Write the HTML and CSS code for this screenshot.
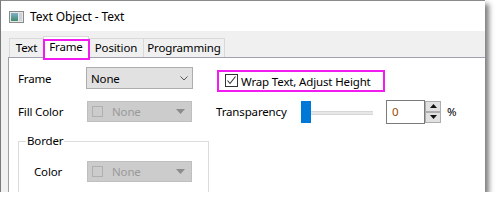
FILE: index.html
```html
<!DOCTYPE html>
<html>
<head>
<meta charset="utf-8">
<link rel="stylesheet" href="styles.css">
</head>
<body>
<div class="window">
  <div class="titlebar">
    <svg class="app-icon" width="15" height="12" viewBox="0 0 15 12">
      <defs>
        <linearGradient id="g1" x1="0" y1="0" x2="0" y2="1">
          <stop offset="0" stop-color="#7fb0c8"/>
          <stop offset="1" stop-color="#3f8a6a"/>
        </linearGradient>
      </defs>
      <rect x="0.5" y="0.5" width="14" height="11" fill="#e8e8e8" stroke="#8a8a8a"/>
      <rect x="2" y="2" width="7" height="8" fill="url(#g1)"/>
      <rect x="10" y="2" width="3" height="8" fill="#c9d3d9"/>
    </svg>
    <span class="title">Text Object - Text</span>
  </div>
  <div class="dialog">
    <div class="tabs">
      <div class="tab w-text">Text</div>
      <div class="tab selected w-frame">Frame<span class="mark"></span></div>
      <div class="tab w-pos">Position</div>
      <div class="tab w-prog">Programming</div>
    </div>
    <div class="panel">
      <div class="col-left">
        <div class="row r1">
          <span class="lbl l1">Frame</span>
          <div class="combo enabled">
            <span class="ctext">None</span>
            <svg class="chev" width="8" height="5" viewBox="0 0 8 5"><path d="M0.5 0.5 L4 4 L7.5 0.5" fill="none" stroke="#555" stroke-width="1"/></svg>
          </div>
        </div>
        <div class="row r2">
          <span class="lbl l2">Fill Color</span>
          <div class="combo disabled">
            <span class="swatch"></span>
            <span class="ctext dis">None</span>
            <svg class="tri" width="9" height="5" viewBox="0 0 9 5"><path d="M0 0 L9 0 L4.5 5 Z" fill="#8c8c8c"/></svg>
          </div>
        </div>
        <fieldset class="group">
          <legend>Border</legend>
          <div class="row r3">
            <span class="lbl l3">Color</span>
            <div class="combo disabled">
              <span class="swatch"></span>
              <span class="ctext dis">None</span>
              <svg class="tri" width="9" height="5" viewBox="0 0 9 5"><path d="M0 0 L9 0 L4.5 5 Z" fill="#8c8c8c"/></svg>
            </div>
          </div>
        </fieldset>
      </div>
      <div class="col-right">
        <label class="check">
          <span class="box">
            <svg width="11" height="11" viewBox="0 0 11 11"><path d="M1.5 5.5 L4 8.5 L9.5 1.5" fill="none" stroke="#333" stroke-width="1.1"/></svg>
          </span>
          <span class="ctext2">Wrap Text, Adjust Height</span>
        </label>
        <div class="row trow">
          <span class="lbl l4">Transparency</span>
          <div class="slider">
            <div class="track"></div>
            <div class="thumb"></div>
          </div>
          <div class="spin">
            <div class="spin-input">0</div>
            <div class="spin-btns">
              <div class="sbtn"><svg width="7" height="4" viewBox="0 0 7 4"><path d="M0 4 L7 4 L3.5 0 Z" fill="#111"/></svg></div>
              <div class="sbtn"><svg width="7" height="4" viewBox="0 0 7 4"><path d="M0 0 L7 0 L3.5 4 Z" fill="#111"/></svg></div>
            </div>
          </div>
          <span class="pct">%</span>
        </div>
      </div>
    </div>
  </div>
</div>
</body>
</html>
```

FILE: styles.css
```css
html, body {
  margin: 0;
  padding: 0;
  background: #ffffff;
}
body {
  font-family: "Noto Sans", "Open Sans", sans-serif;
  font-size: 11.5px;
  letter-spacing: -0.15px;
  color: #000;
}
.window {
  width: 485px;
  height: 192px;
  box-sizing: border-box;
  border-left: 1px solid #7a7a7a;
  border-top: 1px solid #8a8a8a;
  box-shadow: 4px 4px 5px rgba(0, 0, 0, 0.5);
  overflow: hidden;
  display: flex;
  flex-direction: column;
  background: #f0f0f0;
}
.titlebar {
  height: 30px;
  background: #ffffff;
  display: flex;
  align-items: center;
  padding-left: 8px;
  flex: none;
}
.app-icon {
  margin-right: 6px;
  margin-top: 1px;
}
.title {
  font-size: 12px;
  letter-spacing: -0.1px;
  margin-top: 1px;
}
.dialog {
  flex: 1;
  padding: 7px 0 0 7px;
  display: flex;
  flex-direction: column;
}
.tabs {
  display: flex;
  align-items: flex-end;
  height: 19px;
  padding-left: 1px;
  position: relative;
  z-index: 1;
}
.tab {
  box-sizing: border-box;
  height: 19px;
  border: 1px solid #d9d9d9;
  border-bottom: none;
  background: #f0f0f0;
  text-align: center;
  line-height: 17px;
  margin-left: -1px;
  white-space: nowrap;
}
.tab:first-child { margin-left: 0; }
.tab.selected {
  height: 22px;
  background: #ffffff;
  margin-bottom: -1px;
  line-height: 20px;
  position: relative;
  z-index: 2;
}
.w-text { width: 35px; }
.w-frame { width: 46px; }
.w-pos { width: 56px; }
.w-prog { width: 82px; }
.mark {
  position: absolute;
  left: -1px;
  top: 2px;
  width: 47px;
  height: 21px;
  box-sizing: border-box;
  border: 2px solid #f01cf0;
}
.panel {
  flex: 1;
  background: #ffffff;
  border-left: 1px solid #a0a0a0;
  border-top: 1px solid #a0a0b0;
  padding: 9px 0 0 9px;
  display: flex;
}
.col-left {
  width: 191px;
  display: flex;
  flex-direction: column;
}
.col-right {
  margin-left: 7px;
  display: flex;
  flex-direction: column;
}
.row {
  display: flex;
  align-items: center;
}
.lbl { flex: none; }
.l1 { width: 68px; }
.l2 { width: 69px; }
.l3 { width: 53px; }
.l4 { width: 85px; }
.r1 { height: 22px; }
.r2 { height: 21px; margin-top: 12px; }
.combo {
  box-sizing: border-box;
  display: flex;
  align-items: center;
  position: relative;
}
.combo.enabled {
  width: 107px;
  height: 22px;
  border: 1px solid #adadad;
  background: #e1e1e1;
  padding-left: 4px;
}
.combo.disabled {
  width: 105px;
  height: 21px;
  border: 1px solid #bfbfbf;
  background: #cccccc;
  padding-left: 4px;
}
.ctext { flex: 1; }
.ctext.dis {
  color: #9a9a9a;
}
.chev { margin-right: 4px; }
.swatch {
  width: 11px;
  height: 11px;
  box-sizing: border-box;
  border: 1px solid #b0b0b0;
  margin-right: 9px;
}
.tri { margin-right: 6px; }
.group {
  margin: 11px 0 0 0;
  width: 191px;
  box-sizing: border-box;
  border: 1px solid #dcdcdc;
  padding: 0 0 30px 15px;
}
.group legend {
  padding: 0 1px;
  margin-left: -8px;
  line-height: 16px;
}
.r3 {
  height: 21px;
  margin-top: 12px;
}
.check {
  display: flex;
  align-items: center;
  box-sizing: border-box;
  width: 168px;
  height: 22px;
  margin: 3px 0 0 1px;
  border: 2px solid #f01cf0;
  padding-left: 6px;
}
.box {
  box-sizing: border-box;
  width: 13px;
  height: 13px;
  border: 1px solid #333;
  background: #fff;
  display: flex;
  align-items: center;
  justify-content: center;
  margin-right: 3px;
  margin-top: -2px;
}
.box svg { display: block; }
.trow {
  height: 25px;
  margin-top: 7px;
}
.slider {
  width: 72px;
  height: 22px;
  position: relative;
  flex: none;
}
.track {
  position: absolute;
  left: 0;
  right: 0;
  top: 10px;
  background: #e7e7e7;
  border-top: 1px solid #d6d6d6;
  border-bottom: 1px solid #d6d6d6;
  box-sizing: border-box;
  height: 4px;
}
.thumb {
  position: absolute;
  left: 0;
  top: 0;
  width: 10px;
  height: 22px;
  background: #0078d7;
}
.spin {
  display: flex;
  margin-left: 13px;
  height: 24px;
}
.spin-input {
  box-sizing: border-box;
  width: 39px;
  height: 24px;
  border: 1px solid #7a7a7a;
  padding-left: 5px;
  line-height: 22px;
  color: #9a4c00;
}
.spin-btns {
  display: flex;
  flex-direction: column;
  width: 17px;
  justify-content: space-between;
  padding: 1px 0;
  box-sizing: border-box;
}
.sbtn {
  box-sizing: border-box;
  height: 11px;
  width: 16px;
  border: 1px solid #adadad;
  background: #e1e1e1;
  display: flex;
  align-items: center;
  justify-content: center;
}
.sbtn svg { display: block; }
.pct {
  margin-left: 5px;
}
```
